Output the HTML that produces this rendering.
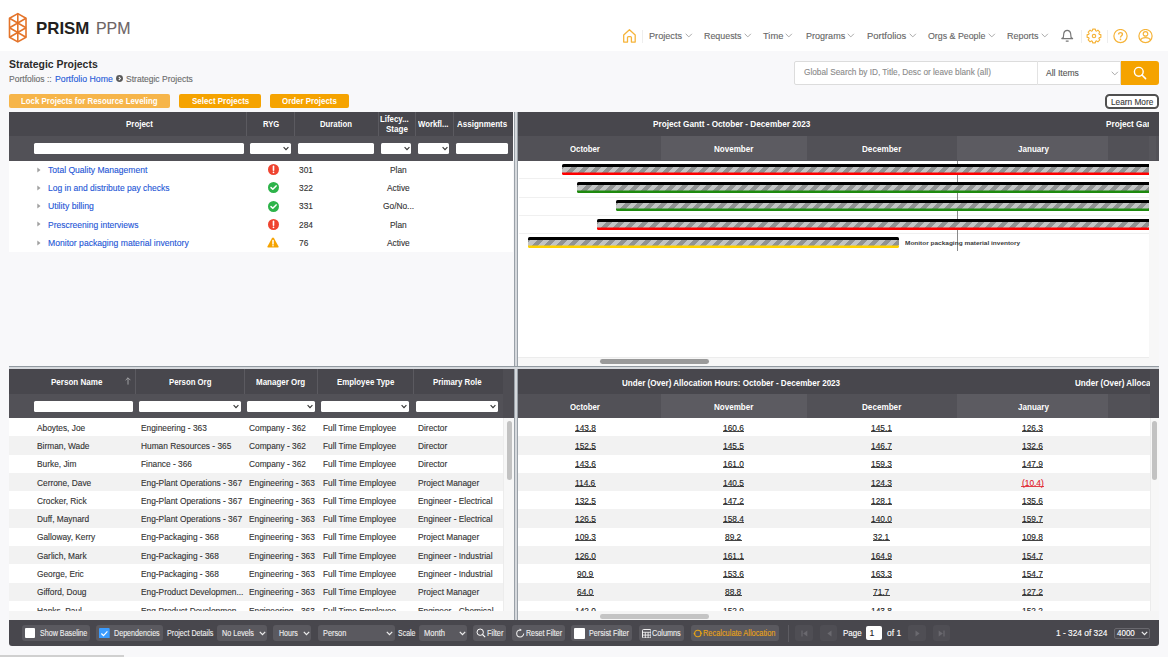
<!DOCTYPE html><html><head><meta charset="utf-8"><style>
*{box-sizing:border-box;margin:0;padding:0}
html,body{width:1168px;height:657px;overflow:hidden;background:#F8F8FA;font-family:"Liberation Sans",sans-serif;color:#333}
div,span,svg{position:absolute}
.t{white-space:nowrap;line-height:1;-webkit-text-stroke:0.12px currentColor}
.chev{width:4.2px;height:4.2px;border-right:0.9px solid #b0b0b0;border-bottom:0.9px solid #b0b0b0;transform:scaleX(1.1) rotate(45deg);top:32.6px}
.btn{top:93.7px;height:14.6px;background:#F5A300;border-radius:2px}
.h1{background:#48474D}
.h2{background:#525157}
.vd{width:1px;background:#5b5a60}
.fi{background:#fff;border-radius:1.5px;height:11px}
.ck{width:3.8px;height:3.8px;border-right:1.1px solid #333;border-bottom:1.1px solid #333;transform:rotate(45deg);top:2.4px}

.tb{background:#5A595F;border-radius:3px;top:625.2px;height:15.6px}
.tc{width:4px;height:4px;border-right:1.2px solid #fff;border-bottom:1.2px solid #fff;transform:scaleX(1.1) rotate(45deg);top:630.9px}
.bar{height:11px;border-radius:1.6px;overflow:hidden;background:repeating-linear-gradient(135deg,#909292 0 4.24px,#C2C4C4 4.24px 8.49px)}
</style></head><body><div style="left:0;top:0;width:1168px;height:51px;background:#fff"></div><svg style="left:8px;top:12px" width="22" height="32" viewBox="8 12 22 32"><g fill="none" stroke="#E4742A" stroke-width="1.6" stroke-linejoin="round">
<path d="M17.8 13.6 L26 18.3 L26 37.2 L17.8 41.9 L9.5 37.2 L9.5 18.3 Z"/><path d="M17.8 13.6 L17.8 41.9"/>
<path d="M9.5 18.3 L26 27.8 M26 18.3 L9.5 27.8 M9.5 27.8 L26 37.2 M26 27.8 L9.5 37.2"/></g>
<circle cx="17.8" cy="22.9" r="1" fill="#E26F22"/><circle cx="17.8" cy="32.6" r="1" fill="#E26F22"/></svg><div class="t" style="left:36.00px;top:20.00px;font-size:17px;color:#231f20;font-weight:bold;-webkit-text-stroke:0;transform:scaleX(0.9899);transform-origin:0 0">PRISM</div><div class="t" style="left:95.60px;top:20.00px;font-size:16.3px;color:#6d6465;transform:scaleX(0.9774);transform-origin:0 0">PPM</div><svg style="left:621px;top:28px" width="17" height="16" viewBox="0 0 17 16"><path d="M2.7 7.0 L8.45 1.7 L14.2 7.0 L14.2 14.1 L10.4 14.1 L10.4 9.6 Q10.4 8.6 9.5 8.6 L7.4 8.6 Q6.5 8.6 6.5 9.6 L6.5 14.1 L2.7 14.1 Z" fill="none" stroke="#F6B43A" stroke-width="1.3" stroke-linejoin="round"/></svg><div style="left:641.8px;top:29.5px;width:1px;height:13px;background:#eeeeee"></div><div class="t" style="left:648.80px;top:31.00px;font-size:9.8px;color:#666;transform:scaleX(0.9325);transform-origin:0 0">Projects</div><svg style="left:685px;top:33px" width="8" height="5" viewBox="0 0 8 5"><path d="M0.7 0.8 L3.8 3.9 L6.9 0.8" fill="none" stroke="#a8a8a8" stroke-width="1"/></svg><div class="t" style="left:703.80px;top:31.00px;font-size:9.8px;color:#666;transform:scaleX(0.9060);transform-origin:0 0">Requests</div><svg style="left:744px;top:33px" width="8" height="5" viewBox="0 0 8 5"><path d="M0.7 0.8 L3.8 3.9 L6.9 0.8" fill="none" stroke="#a8a8a8" stroke-width="1"/></svg><div class="t" style="left:763.30px;top:31.00px;font-size:9.8px;color:#666;transform:scaleX(0.9523);transform-origin:0 0">Time</div><svg style="left:785px;top:33px" width="8" height="5" viewBox="0 0 8 5"><path d="M0.7 0.8 L3.8 3.9 L6.9 0.8" fill="none" stroke="#a8a8a8" stroke-width="1"/></svg><div class="t" style="left:805.50px;top:31.00px;font-size:9.8px;color:#666;transform:scaleX(0.9230);transform-origin:0 0">Programs</div><svg style="left:847px;top:33px" width="8" height="5" viewBox="0 0 8 5"><path d="M0.7 0.8 L3.8 3.9 L6.9 0.8" fill="none" stroke="#a8a8a8" stroke-width="1"/></svg><div class="t" style="left:866.90px;top:31.00px;font-size:9.8px;color:#666;transform:scaleX(0.9622);transform-origin:0 0">Portfolios</div><svg style="left:909px;top:33px" width="8" height="5" viewBox="0 0 8 5"><path d="M0.7 0.8 L3.8 3.9 L6.9 0.8" fill="none" stroke="#a8a8a8" stroke-width="1"/></svg><div class="t" style="left:928.00px;top:31.00px;font-size:9.8px;color:#666;transform:scaleX(0.9008);transform-origin:0 0">Orgs &amp; People</div><svg style="left:988px;top:33px" width="8" height="5" viewBox="0 0 8 5"><path d="M0.7 0.8 L3.8 3.9 L6.9 0.8" fill="none" stroke="#a8a8a8" stroke-width="1"/></svg><div class="t" style="left:1007.00px;top:31.00px;font-size:9.8px;color:#666;transform:scaleX(0.9180);transform-origin:0 0">Reports</div><svg style="left:1041px;top:33px" width="8" height="5" viewBox="0 0 8 5"><path d="M0.7 0.8 L3.8 3.9 L6.9 0.8" fill="none" stroke="#a8a8a8" stroke-width="1"/></svg><svg style="left:1060px;top:28px" width="15" height="16" viewBox="0 0 15 16"><path d="M3.3 9.6 L3.8 5.4 Q4.2 2.3 7.2 2.3 Q10.2 2.3 10.6 5.4 L11.1 9.6 L12.6 10.6 L1.8 10.6 Z" fill="none" stroke="#777" stroke-width="1.15" stroke-linejoin="round"/><path d="M6.2 13.1 L8.2 13.1" stroke="#777" stroke-width="1.2" stroke-linecap="round"/></svg><div style="left:1081px;top:29.5px;width:1px;height:13px;background:#eeeeee"></div><svg style="left:1085.7px;top:27.6px" width="16" height="16" viewBox="-8 -8 16 16"><path d="M-1.65 -5.25 L-1.34 -6.87 L1.34 -6.87 L1.65 -5.25 L2.54 -4.88 L3.91 -5.80 L5.80 -3.91 L4.88 -2.54 L5.25 -1.65 L6.87 -1.34 L6.87 1.34 L5.25 1.65 L4.88 2.54 L5.80 3.91 L3.91 5.80 L2.54 4.88 L1.65 5.25 L1.34 6.87 L-1.34 6.87 L-1.65 5.25 L-2.54 4.88 L-3.91 5.80 L-5.80 3.91 L-4.88 2.54 L-5.25 1.65 L-6.87 1.34 L-6.87 -1.34 L-5.25 -1.65 L-4.88 -2.54 L-5.80 -3.91 L-3.91 -5.80 L-2.54 -4.88 Z" fill="none" stroke="#F6B43A" stroke-width="1.15" stroke-linejoin="round"/><circle r="1.7" fill="none" stroke="#F6B43A" stroke-width="1.15"/></svg><div style="left:1107px;top:29.5px;width:1px;height:13px;background:#eeeeee"></div><svg style="left:1112.5px;top:28.5px" width="15" height="15" viewBox="0 0 15 15"><circle cx="7.5" cy="7.1" r="6.6" fill="none" stroke="#F6B43A" stroke-width="1.2"/><path d="M5.6 5.5 Q5.6 3.6 7.5 3.6 Q9.4 3.6 9.4 5.3 Q9.4 6.4 8.3 7 Q7.5 7.5 7.5 8.5" fill="none" stroke="#F6B43A" stroke-width="1.4"/><circle cx="7.5" cy="10.4" r="0.85" fill="#F6B43A"/></svg><svg style="left:1138.3px;top:28.5px" width="15" height="15" viewBox="0 0 15 15"><circle cx="7.5" cy="7.1" r="6.6" fill="none" stroke="#F6B43A" stroke-width="1.2"/><circle cx="7.5" cy="4.9" r="2.3" fill="none" stroke="#F6B43A" stroke-width="1.2"/><path d="M2.2 11.2 Q3.6 8.6 7.5 8.6 Q11.4 8.6 12.8 11.2" fill="none" stroke="#F6B43A" stroke-width="1.2"/></svg><div class="t" style="left:9.30px;top:59.00px;font-size:11.1px;color:#2b2b2b;font-weight:bold;-webkit-text-stroke:0;transform:scaleX(0.9402);transform-origin:0 0">Strategic Projects</div><div class="t" style="left:9.30px;top:75.00px;font-size:9.3px;color:#6b6b6b;transform:scaleX(0.9180);transform-origin:0 0">Portfolios ::</div><div class="t" style="left:54.70px;top:75.00px;font-size:9.3px;color:#2458d8;transform:scaleX(0.9398);transform-origin:0 0">Portfolio Home</div><svg style="left:115.9px;top:75.2px" width="7" height="7" viewBox="0 0 7 7"><circle cx="3.5" cy="3.5" r="3.45" fill="#595959"/><path d="M2.8 1.9 L4.4 3.5 L2.8 5.1" fill="none" stroke="#fff" stroke-width="1.05"/></svg><div class="t" style="left:126.00px;top:75.00px;font-size:9.3px;color:#6b6b6b;transform:scaleX(0.9168);transform-origin:0 0">Strategic Projects</div><div style="left:794.2px;top:60.6px;width:327px;height:24px;background:#fff;border:1px solid #dcdcdc;border-radius:2px 0 0 2px"></div><div style="left:1036.8px;top:60.6px;width:1px;height:24px;background:#e3e3e3"></div><div class="t" style="left:803.70px;top:68.00px;font-size:9.1px;color:#8a8a8a;transform:scaleX(0.9085);transform-origin:0 0">Global Search by ID, Title, Desc or leave blank (all)</div><div class="t" style="left:1046.30px;top:69.00px;font-size:9.1px;color:#555;transform:scaleX(0.9405);transform-origin:0 0">All Items</div><svg style="left:1111px;top:71px" width="8" height="5" viewBox="0 0 8 5"><path d="M0.7 0.8 L3.8 3.9 L6.9 0.8" fill="none" stroke="#a8a8a8" stroke-width="1"/></svg><div style="left:1121px;top:60.6px;width:37.8px;height:24px;background:#F5A300;border-radius:0 3px 3px 0"></div><svg style="left:1133px;top:66px" width="14" height="14" viewBox="0 0 14 14"><circle cx="5.8" cy="5.8" r="4.4" fill="none" stroke="#fff" stroke-width="1.4"/><path d="M9 9 L12.6 12.6" stroke="#fff" stroke-width="1.5" stroke-linecap="round"/></svg><div style="left:1105.3px;top:94.3px;width:53.5px;height:14.8px;border:2px solid #505050;border-radius:4.5px;background:#fff"></div><div class="t" style="left:1110.60px;top:98.00px;font-size:8.8px;color:#3a3a3a;transform:scaleX(0.9400);transform-origin:0 0">Learn More</div><div class="btn" style="left:9.2px;width:161px;background:#F6B54A"></div><div class="t" style="left:21.40px;top:97.00px;font-size:9px;color:#fff;font-weight:bold;-webkit-text-stroke:0;transform:scaleX(0.8753);transform-origin:0 0">Lock Projects for Resource Leveling</div><div class="btn" style="left:179.4px;width:81.2px"></div><div class="t" style="left:191.60px;top:97.00px;font-size:9px;color:#fff;font-weight:bold;-webkit-text-stroke:0;transform:scaleX(0.8877);transform-origin:0 0">Select Projects</div><div class="btn" style="left:270px;width:79px"></div><div class="t" style="left:282.20px;top:97.00px;font-size:9px;color:#fff;font-weight:bold;-webkit-text-stroke:0;transform:scaleX(0.8764);transform-origin:0 0">Order Projects</div><div class="h1" style="left:9px;top:112px;width:503.5px;height:24px"></div><div class="h2" style="left:9px;top:136px;width:503.5px;height:24.6px"></div><div class="vd" style="left:246.4px;top:112px;height:24px"></div><div class="vd" style="left:294.4px;top:112px;height:24px"></div><div class="vd" style="left:377.6px;top:112px;height:24px"></div><div class="vd" style="left:414.7px;top:112px;height:24px"></div><div class="vd" style="left:452.8px;top:112px;height:24px"></div><div class="t" style="left:125.90px;top:120.00px;font-size:8.85px;color:#fff;font-weight:bold;-webkit-text-stroke:0;transform:scaleX(0.8971);transform-origin:0 0">Project</div><div class="t" style="left:262.90px;top:120.00px;font-size:8.85px;color:#fff;font-weight:bold;-webkit-text-stroke:0;transform:scaleX(0.8650);transform-origin:0 0">RYG</div><div class="t" style="left:320.40px;top:120.00px;font-size:8.85px;color:#fff;font-weight:bold;-webkit-text-stroke:0;transform:scaleX(0.8774);transform-origin:0 0">Duration</div><div class="t" style="left:417.50px;top:120.00px;font-size:8.85px;color:#fff;font-weight:bold;-webkit-text-stroke:0;transform:scaleX(0.8781);transform-origin:0 0">Workfl...</div><div class="t" style="left:457.00px;top:120.00px;font-size:8.85px;color:#fff;font-weight:bold;-webkit-text-stroke:0;transform:scaleX(0.9037);transform-origin:0 0">Assignments</div><div class="t" style="left:379.80px;top:115.00px;font-size:8.85px;color:#fff;font-weight:bold;-webkit-text-stroke:0;transform:scaleX(0.8891);transform-origin:0 0">Lifecy...</div><div class="t" style="left:385.50px;top:125.00px;font-size:8.85px;color:#fff;font-weight:bold;-webkit-text-stroke:0;transform:scaleX(0.9089);transform-origin:0 0">Stage</div><div class="fi" style="left:33.8px;top:143px;width:210.4px"></div><div class="fi" style="left:250px;top:143px;width:41.0px"><svg style="left:33.0px;top:3px" width="6" height="5" viewBox="0 0 6 5"><path d="M0.6 1.2 L3 3.6 L5.4 1.2" fill="none" stroke="#333" stroke-width="1.15"/></svg></div><div class="fi" style="left:297.6px;top:143px;width:76.4px"></div><div class="fi" style="left:380.8px;top:143px;width:30.5px"><svg style="left:23.2px;top:3px" width="6" height="5" viewBox="0 0 6 5"><path d="M0.6 1.2 L3 3.6 L5.4 1.2" fill="none" stroke="#333" stroke-width="1.15"/></svg></div><div class="fi" style="left:418px;top:143px;width:31.3px"><svg style="left:24.0px;top:3px" width="6" height="5" viewBox="0 0 6 5"><path d="M0.6 1.2 L3 3.6 L5.4 1.2" fill="none" stroke="#333" stroke-width="1.15"/></svg></div><div class="fi" style="left:455.5px;top:143px;width:52.5px"></div><div style="left:9px;top:160.6px;width:503.5px;height:91.79999999999998px;background:#fff"></div><svg style="left:37px;top:166.72px" width="4" height="6" viewBox="0 0 4 6"><path d="M0.3 0.6 L3.5 3 L0.3 5.4 Z" fill="#a0a0a0"/></svg><div class="t" style="left:47.60px;top:165.00px;font-size:9.4px;color:#2456d6;transform:scaleX(0.9126);transform-origin:0 0">Total Quality Management</div><svg style="left:267.5px;top:164.22px" width="11" height="11" viewBox="0 0 11 11"><circle cx="5.5" cy="5.5" r="5.5" fill="#EF4430"/><path d="M5.5 2.4 L5.5 6.3" stroke="#fff" stroke-width="1.6" stroke-linecap="round"/><circle cx="5.5" cy="8.3" r="0.85" fill="#fff"/></svg><div class="t" style="left:299.20px;top:166.00px;font-size:8.7px;color:#333;transform:scaleX(0.9600);transform-origin:0 0">301</div><div class="t" style="left:390.15px;top:166.00px;font-size:8.7px;color:#333;transform:scaleX(0.9600);transform-origin:0 0">Plan</div><svg style="left:37px;top:184.96px" width="4" height="6" viewBox="0 0 4 6"><path d="M0.3 0.6 L3.5 3 L0.3 5.4 Z" fill="#a0a0a0"/></svg><div class="t" style="left:47.60px;top:183.00px;font-size:9.4px;color:#2456d6;transform:scaleX(0.9079);transform-origin:0 0">Log in and distribute pay checks</div><svg style="left:267.5px;top:182.46px" width="11" height="11" viewBox="0 0 11 11"><circle cx="5.5" cy="5.5" r="5.5" fill="#2DB34A"/><path d="M3 5.6 L4.8 7.3 L8.1 3.9" fill="none" stroke="#fff" stroke-width="1.5" stroke-linecap="round" stroke-linejoin="round"/></svg><div class="t" style="left:299.20px;top:184.00px;font-size:8.7px;color:#333;transform:scaleX(0.9600);transform-origin:0 0">322</div><div class="t" style="left:387.14px;top:184.00px;font-size:8.7px;color:#333;transform:scaleX(0.9600);transform-origin:0 0">Active</div><svg style="left:37px;top:203.20px" width="4" height="6" viewBox="0 0 4 6"><path d="M0.3 0.6 L3.5 3 L0.3 5.4 Z" fill="#a0a0a0"/></svg><div class="t" style="left:47.60px;top:201.00px;font-size:9.4px;color:#2456d6;transform:scaleX(0.9273);transform-origin:0 0">Utility billing</div><svg style="left:267.5px;top:200.70px" width="11" height="11" viewBox="0 0 11 11"><circle cx="5.5" cy="5.5" r="5.5" fill="#2DB34A"/><path d="M3 5.6 L4.8 7.3 L8.1 3.9" fill="none" stroke="#fff" stroke-width="1.5" stroke-linecap="round" stroke-linejoin="round"/></svg><div class="t" style="left:299.20px;top:202.00px;font-size:8.7px;color:#333;transform:scaleX(0.9600);transform-origin:0 0">331</div><div class="t" style="left:382.97px;top:202.00px;font-size:8.7px;color:#333;transform:scaleX(0.9600);transform-origin:0 0">Go/No...</div><svg style="left:37px;top:221.44px" width="4" height="6" viewBox="0 0 4 6"><path d="M0.3 0.6 L3.5 3 L0.3 5.4 Z" fill="#a0a0a0"/></svg><div class="t" style="left:47.60px;top:220.00px;font-size:9.4px;color:#2456d6;transform:scaleX(0.9083);transform-origin:0 0">Prescreening interviews</div><svg style="left:267.5px;top:218.94px" width="11" height="11" viewBox="0 0 11 11"><circle cx="5.5" cy="5.5" r="5.5" fill="#EF4430"/><path d="M5.5 2.4 L5.5 6.3" stroke="#fff" stroke-width="1.6" stroke-linecap="round"/><circle cx="5.5" cy="8.3" r="0.85" fill="#fff"/></svg><div class="t" style="left:299.20px;top:221.00px;font-size:8.7px;color:#333;transform:scaleX(0.9600);transform-origin:0 0">284</div><div class="t" style="left:390.15px;top:221.00px;font-size:8.7px;color:#333;transform:scaleX(0.9600);transform-origin:0 0">Plan</div><svg style="left:37px;top:239.68px" width="4" height="6" viewBox="0 0 4 6"><path d="M0.3 0.6 L3.5 3 L0.3 5.4 Z" fill="#a0a0a0"/></svg><div class="t" style="left:47.60px;top:238.00px;font-size:9.4px;color:#2456d6;transform:scaleX(0.9184);transform-origin:0 0">Monitor packaging material inventory</div><svg style="left:267px;top:236.68px" width="12" height="11" viewBox="0 0 12 11"><path d="M6 0.6 Q6.6 0.6 7 1.3 L11.6 9.6 Q11.9 10.6 10.9 10.6 L1.1 10.6 Q0.1 10.6 0.4 9.6 L5 1.3 Q5.4 0.6 6 0.6 Z" fill="#F5A300"/><path d="M6 3.6 L6 6.9" stroke="#fff" stroke-width="1.5" stroke-linecap="round"/><circle cx="6" cy="8.7" r="0.8" fill="#fff"/></svg><div class="t" style="left:299.20px;top:239.00px;font-size:8.7px;color:#333;transform:scaleX(0.9600);transform-origin:0 0">76</div><div class="t" style="left:387.14px;top:239.00px;font-size:8.7px;color:#333;transform:scaleX(0.9600);transform-origin:0 0">Active</div><div style="left:513.6px;top:112px;width:4.4px;height:508.3px;background:#D6D9DD;border-left:1.3px solid #9AA1A8;border-right:1.3px solid #9AA1A8"></div><div class="h1" style="left:518px;top:112px;width:640.6px;height:24px"></div><div class="h2" style="left:518px;top:136px;width:640.6px;height:24.6px"></div><div class="t" style="left:652.70px;top:120.00px;font-size:8.85px;color:#fff;font-weight:bold;-webkit-text-stroke:0;transform:scaleX(0.9255);transform-origin:0 0">Project Gantt - October - December 2023</div><div style="left:1105.5px;top:112px;width:43.8px;height:24px;overflow:hidden"><div class="t" style="left:0.00px;top:8.00px;font-size:8.85px;color:#fff;font-weight:bold;-webkit-text-stroke:0;transform:scaleX(0.9255);transform-origin:0 0">Project Gantt - October - December 2023</div></div><div class="t" style="left:570.30px;top:145.00px;font-size:8.85px;color:#fff;font-weight:bold;-webkit-text-stroke:0;transform:scaleX(0.8814);transform-origin:0 0">October</div><div style="left:660.7px;top:136px;width:146.1px;height:24.4px;background:#5C5B61"></div><div class="t" style="left:713.80px;top:145.00px;font-size:8.85px;color:#fff;font-weight:bold;-webkit-text-stroke:0;transform:scaleX(0.9107);transform-origin:0 0">November</div><div class="t" style="left:862.45px;top:145.00px;font-size:8.85px;color:#fff;font-weight:bold;-webkit-text-stroke:0;transform:scaleX(0.9186);transform-origin:0 0">December</div><div style="left:957.2px;top:136px;width:151.1px;height:24.4px;background:#5C5B61"></div><div class="t" style="left:1017.55px;top:145.00px;font-size:8.85px;color:#fff;font-weight:bold;-webkit-text-stroke:0;transform:scaleX(0.9109);transform-origin:0 0">January</div><div style="left:1149.3px;top:136px;width:6.7px;height:24.4px;background:#57565C"></div><div style="left:518px;top:160.6px;width:631.3px;height:196.5px;background:#fff"></div><div style="left:1149.3px;top:160.6px;width:9.3px;height:205.2px;background:#F7F7F7"></div><div style="left:518px;top:357.1px;width:631.3px;height:8.7px;background:#F7F7F7;border-top:1px solid #ececec"></div><div style="left:600.4px;top:359.4px;width:108.2px;height:4.8px;background:#9a9a9a;border-radius:2.4px"></div><div style="left:519px;top:178.34px;width:630.3px;height:1px;background:#F0F0F0"></div><div style="left:519px;top:196.58px;width:630.3px;height:1px;background:#F0F0F0"></div><div style="left:519px;top:214.82px;width:630.3px;height:1px;background:#F0F0F0"></div><div style="left:519px;top:233.06px;width:630.3px;height:1px;background:#F0F0F0"></div><div style="left:957px;top:160.6px;width:1px;height:90px;background:#8a8a8a"></div><div class="bar" style="left:562.3px;top:164px;width:586.7px;border-radius:1.6px 0 0 1.6px;background:linear-gradient(#000 0 3px,transparent 3px 8px,#FF0000 9px),repeating-linear-gradient(135deg,#909292 0 4.24px,#C2C4C4 4.24px 8.49px)"></div><div class="bar" style="left:577px;top:182px;width:572.0px;border-radius:1.6px 0 0 1.6px;background:linear-gradient(#000 0 3px,transparent 3px 8px,#1E8A0E 9px),repeating-linear-gradient(135deg,#909292 0 4.24px,#C2C4C4 4.24px 8.49px)"></div><div class="bar" style="left:616.1px;top:200px;width:532.9px;border-radius:1.6px 0 0 1.6px;background:linear-gradient(#000 0 3px,transparent 3px 8px,#1E8A0E 9px),repeating-linear-gradient(135deg,#909292 0 4.24px,#C2C4C4 4.24px 8.49px)"></div><div class="bar" style="left:596.5px;top:219px;width:552.5px;border-radius:1.6px 0 0 1.6px;background:linear-gradient(#000 0 3px,transparent 3px 8px,#FF0000 9px),repeating-linear-gradient(135deg,#909292 0 4.24px,#C2C4C4 4.24px 8.49px)"></div><div class="bar" style="left:528.2px;top:237px;width:370.8px;border-radius:1.6px;background:linear-gradient(#000 0 3px,transparent 3px 8px,#FFD200 9px),repeating-linear-gradient(135deg,#909292 0 4.24px,#C2C4C4 4.24px 8.49px)"></div><div class="t" style="left:905.00px;top:240.00px;font-size:6.2px;color:#3a3a3a;font-weight:bold;-webkit-text-stroke:0;transform:scaleX(1.0470);transform-origin:0 0">Monitor packaging material inventory</div><div style="left:9px;top:365.8px;width:1149.6px;height:3.2px;background:#D6D9DD;border-top:1.2px solid #929AA1"></div><div class="h1" style="left:9px;top:369px;width:494.4px;height:25px"></div><div class="h2" style="left:9px;top:394px;width:494.4px;height:24.1px"></div><div style="left:503.4px;top:369px;width:10.2px;height:49.1px;background:#4E4D53"></div><div class="vd" style="left:135.4px;top:369px;height:25px"></div><div class="vd" style="left:243.6px;top:369px;height:25px"></div><div class="vd" style="left:317.4px;top:369px;height:25px"></div><div class="vd" style="left:412.6px;top:369px;height:25px"></div><div class="t" style="left:51.30px;top:378.00px;font-size:8.85px;color:#fff;font-weight:bold;-webkit-text-stroke:0;transform:scaleX(0.9092);transform-origin:0 0">Person Name</div><div class="t" style="left:168.80px;top:378.00px;font-size:8.85px;color:#fff;font-weight:bold;-webkit-text-stroke:0;transform:scaleX(0.8802);transform-origin:0 0">Person Org</div><div class="t" style="left:256.30px;top:378.00px;font-size:8.85px;color:#fff;font-weight:bold;-webkit-text-stroke:0;transform:scaleX(0.9017);transform-origin:0 0">Manager Org</div><div class="t" style="left:336.60px;top:378.00px;font-size:8.85px;color:#fff;font-weight:bold;-webkit-text-stroke:0;transform:scaleX(0.8920);transform-origin:0 0">Employee Type</div><div class="t" style="left:432.50px;top:378.00px;font-size:8.85px;color:#fff;font-weight:bold;-webkit-text-stroke:0;transform:scaleX(0.8889);transform-origin:0 0">Primary Role</div><svg style="left:124.6px;top:377.4px" width="6" height="8" viewBox="0 0 6 8"><path d="M3 7.6 L3 0.8 M0.6 3.2 L3 0.8 L5.4 3.2" fill="none" stroke="#a8a8ac" stroke-width="0.9"/></svg><div class="fi" style="left:33.8px;top:401px;width:99.2px"></div><div class="fi" style="left:138.7px;top:401px;width:102.3px"><svg style="left:94.3px;top:3px" width="6" height="5" viewBox="0 0 6 5"><path d="M0.6 1.2 L3 3.6 L5.4 1.2" fill="none" stroke="#333" stroke-width="1.15"/></svg></div><div class="fi" style="left:247px;top:401px;width:67.5px"><svg style="left:60.0px;top:3px" width="6" height="5" viewBox="0 0 6 5"><path d="M0.6 1.2 L3 3.6 L5.4 1.2" fill="none" stroke="#333" stroke-width="1.15"/></svg></div><div class="fi" style="left:320.7px;top:401px;width:88.1px"><svg style="left:80.3px;top:3px" width="6" height="5" viewBox="0 0 6 5"><path d="M0.6 1.2 L3 3.6 L5.4 1.2" fill="none" stroke="#333" stroke-width="1.15"/></svg></div><div class="fi" style="left:415.5px;top:401px;width:82.0px"><svg style="left:74.5px;top:3px" width="6" height="5" viewBox="0 0 6 5"><path d="M0.6 1.2 L3 3.6 L5.4 1.2" fill="none" stroke="#333" stroke-width="1.15"/></svg></div><div style="left:9px;top:418px;width:494.4px;height:193.3px;overflow:hidden;background:#fff"><div style="left:0;top:0.00px;width:494.4px;height:18.29px;background:#fff"></div><div class="t" style="left:27.70px;top:6.00px;font-size:8.6px;color:#333;transform:scaleX(0.9700);transform-origin:0 0">Aboytes, Joe</div><div class="t" style="left:132.10px;top:6.00px;font-size:8.6px;color:#333;transform:scaleX(0.9700);transform-origin:0 0">Engineering - 363</div><div class="t" style="left:240.30px;top:6.00px;font-size:8.6px;color:#333;transform:scaleX(0.9700);transform-origin:0 0">Company - 362</div><div class="t" style="left:313.80px;top:6.00px;font-size:8.6px;color:#333;transform:scaleX(0.9700);transform-origin:0 0">Full Time Employee</div><div class="t" style="left:408.60px;top:6.00px;font-size:8.6px;color:#333;transform:scaleX(0.9700);transform-origin:0 0">Director</div><div style="left:0;top:18.29px;width:494.4px;height:18.29px;background:#F2F2F2"></div><div class="t" style="left:27.70px;top:24.00px;font-size:8.6px;color:#333;transform:scaleX(0.9700);transform-origin:0 0">Birman, Wade</div><div class="t" style="left:132.10px;top:24.00px;font-size:8.6px;color:#333;transform:scaleX(0.9700);transform-origin:0 0">Human Resources - 365</div><div class="t" style="left:240.30px;top:24.00px;font-size:8.6px;color:#333;transform:scaleX(0.9700);transform-origin:0 0">Company - 362</div><div class="t" style="left:313.80px;top:24.00px;font-size:8.6px;color:#333;transform:scaleX(0.9700);transform-origin:0 0">Full Time Employee</div><div class="t" style="left:408.60px;top:24.00px;font-size:8.6px;color:#333;transform:scaleX(0.9700);transform-origin:0 0">Director</div><div style="left:0;top:36.58px;width:494.4px;height:18.29px;background:#fff"></div><div class="t" style="left:27.70px;top:42.00px;font-size:8.6px;color:#333;transform:scaleX(0.9700);transform-origin:0 0">Burke, Jim</div><div class="t" style="left:132.10px;top:42.00px;font-size:8.6px;color:#333;transform:scaleX(0.9700);transform-origin:0 0">Finance - 366</div><div class="t" style="left:240.30px;top:42.00px;font-size:8.6px;color:#333;transform:scaleX(0.9700);transform-origin:0 0">Company - 362</div><div class="t" style="left:313.80px;top:42.00px;font-size:8.6px;color:#333;transform:scaleX(0.9700);transform-origin:0 0">Full Time Employee</div><div class="t" style="left:408.60px;top:42.00px;font-size:8.6px;color:#333;transform:scaleX(0.9700);transform-origin:0 0">Director</div><div style="left:0;top:54.87px;width:494.4px;height:18.29px;background:#F2F2F2"></div><div class="t" style="left:27.70px;top:61.00px;font-size:8.6px;color:#333;transform:scaleX(0.9700);transform-origin:0 0">Cerrone, Dave</div><div class="t" style="left:132.10px;top:61.00px;font-size:8.6px;color:#333;transform:scaleX(0.9700);transform-origin:0 0">Eng-Plant Operations - 367</div><div class="t" style="left:240.30px;top:61.00px;font-size:8.6px;color:#333;transform:scaleX(0.9700);transform-origin:0 0">Engineering - 363</div><div class="t" style="left:313.80px;top:61.00px;font-size:8.6px;color:#333;transform:scaleX(0.9700);transform-origin:0 0">Full Time Employee</div><div class="t" style="left:408.60px;top:61.00px;font-size:8.6px;color:#333;transform:scaleX(0.9700);transform-origin:0 0">Project Manager</div><div style="left:0;top:73.16px;width:494.4px;height:18.29px;background:#fff"></div><div class="t" style="left:27.70px;top:79.00px;font-size:8.6px;color:#333;transform:scaleX(0.9700);transform-origin:0 0">Crocker, Rick</div><div class="t" style="left:132.10px;top:79.00px;font-size:8.6px;color:#333;transform:scaleX(0.9700);transform-origin:0 0">Eng-Plant Operations - 367</div><div class="t" style="left:240.30px;top:79.00px;font-size:8.6px;color:#333;transform:scaleX(0.9700);transform-origin:0 0">Engineering - 363</div><div class="t" style="left:313.80px;top:79.00px;font-size:8.6px;color:#333;transform:scaleX(0.9700);transform-origin:0 0">Full Time Employee</div><div class="t" style="left:408.60px;top:79.00px;font-size:8.6px;color:#333;transform:scaleX(0.9700);transform-origin:0 0">Engineer - Electrical</div><div style="left:0;top:91.45px;width:494.4px;height:18.29px;background:#F2F2F2"></div><div class="t" style="left:27.70px;top:97.00px;font-size:8.6px;color:#333;transform:scaleX(0.9700);transform-origin:0 0">Duff, Maynard</div><div class="t" style="left:132.10px;top:97.00px;font-size:8.6px;color:#333;transform:scaleX(0.9700);transform-origin:0 0">Eng-Plant Operations - 367</div><div class="t" style="left:240.30px;top:97.00px;font-size:8.6px;color:#333;transform:scaleX(0.9700);transform-origin:0 0">Engineering - 363</div><div class="t" style="left:313.80px;top:97.00px;font-size:8.6px;color:#333;transform:scaleX(0.9700);transform-origin:0 0">Full Time Employee</div><div class="t" style="left:408.60px;top:97.00px;font-size:8.6px;color:#333;transform:scaleX(0.9700);transform-origin:0 0">Engineer - Electrical</div><div style="left:0;top:109.74px;width:494.4px;height:18.29px;background:#fff"></div><div class="t" style="left:27.70px;top:115.00px;font-size:8.6px;color:#333;transform:scaleX(0.9700);transform-origin:0 0">Galloway, Kerry</div><div class="t" style="left:132.10px;top:115.00px;font-size:8.6px;color:#333;transform:scaleX(0.9700);transform-origin:0 0">Eng-Packaging - 368</div><div class="t" style="left:240.30px;top:115.00px;font-size:8.6px;color:#333;transform:scaleX(0.9700);transform-origin:0 0">Engineering - 363</div><div class="t" style="left:313.80px;top:115.00px;font-size:8.6px;color:#333;transform:scaleX(0.9700);transform-origin:0 0">Full Time Employee</div><div class="t" style="left:408.60px;top:115.00px;font-size:8.6px;color:#333;transform:scaleX(0.9700);transform-origin:0 0">Project Manager</div><div style="left:0;top:128.03px;width:494.4px;height:18.29px;background:#F2F2F2"></div><div class="t" style="left:27.70px;top:134.00px;font-size:8.6px;color:#333;transform:scaleX(0.9700);transform-origin:0 0">Garlich, Mark</div><div class="t" style="left:132.10px;top:134.00px;font-size:8.6px;color:#333;transform:scaleX(0.9700);transform-origin:0 0">Eng-Packaging - 368</div><div class="t" style="left:240.30px;top:134.00px;font-size:8.6px;color:#333;transform:scaleX(0.9700);transform-origin:0 0">Engineering - 363</div><div class="t" style="left:313.80px;top:134.00px;font-size:8.6px;color:#333;transform:scaleX(0.9700);transform-origin:0 0">Full Time Employee</div><div class="t" style="left:408.60px;top:134.00px;font-size:8.6px;color:#333;transform:scaleX(0.9700);transform-origin:0 0">Engineer - Industrial</div><div style="left:0;top:146.32px;width:494.4px;height:18.29px;background:#fff"></div><div class="t" style="left:27.70px;top:152.00px;font-size:8.6px;color:#333;transform:scaleX(0.9700);transform-origin:0 0">George, Eric</div><div class="t" style="left:132.10px;top:152.00px;font-size:8.6px;color:#333;transform:scaleX(0.9700);transform-origin:0 0">Eng-Packaging - 368</div><div class="t" style="left:240.30px;top:152.00px;font-size:8.6px;color:#333;transform:scaleX(0.9700);transform-origin:0 0">Engineering - 363</div><div class="t" style="left:313.80px;top:152.00px;font-size:8.6px;color:#333;transform:scaleX(0.9700);transform-origin:0 0">Full Time Employee</div><div class="t" style="left:408.60px;top:152.00px;font-size:8.6px;color:#333;transform:scaleX(0.9700);transform-origin:0 0">Engineer - Industrial</div><div style="left:0;top:164.61px;width:494.4px;height:18.29px;background:#F2F2F2"></div><div class="t" style="left:27.70px;top:170.00px;font-size:8.6px;color:#333;transform:scaleX(0.9700);transform-origin:0 0">Gifford, Doug</div><div class="t" style="left:132.10px;top:170.00px;font-size:8.6px;color:#333;transform:scaleX(0.9700);transform-origin:0 0">Eng-Product Developmen...</div><div class="t" style="left:240.30px;top:170.00px;font-size:8.6px;color:#333;transform:scaleX(0.9700);transform-origin:0 0">Engineering - 363</div><div class="t" style="left:313.80px;top:170.00px;font-size:8.6px;color:#333;transform:scaleX(0.9700);transform-origin:0 0">Full Time Employee</div><div class="t" style="left:408.60px;top:170.00px;font-size:8.6px;color:#333;transform:scaleX(0.9700);transform-origin:0 0">Project Manager</div><div style="left:0;top:182.90px;width:494.4px;height:18.29px;background:#fff"></div><div class="t" style="left:27.70px;top:189.00px;font-size:8.6px;color:#333;transform:scaleX(0.9700);transform-origin:0 0">Hanks, Paul</div><div class="t" style="left:132.10px;top:189.00px;font-size:8.6px;color:#333;transform:scaleX(0.9700);transform-origin:0 0">Eng-Product Developmen...</div><div class="t" style="left:240.30px;top:189.00px;font-size:8.6px;color:#333;transform:scaleX(0.9700);transform-origin:0 0">Engineering - 363</div><div class="t" style="left:313.80px;top:189.00px;font-size:8.6px;color:#333;transform:scaleX(0.9700);transform-origin:0 0">Full Time Employee</div><div class="t" style="left:408.60px;top:189.00px;font-size:8.6px;color:#333;transform:scaleX(0.9700);transform-origin:0 0">Engineer - Chemical</div></div><div style="left:503.4px;top:418px;width:10.2px;height:193.3px;background:#F7F7F7;border-left:1px solid #ececec"></div><div style="left:507px;top:420.8px;width:5px;height:59.7px;background:#C2C2C2;border-radius:2.5px"></div><div class="h1" style="left:518px;top:369px;width:640.6px;height:25px"></div><div class="h2" style="left:518px;top:394px;width:640.6px;height:24.1px"></div><div class="t" style="left:622.30px;top:379.00px;font-size:8.85px;color:#fff;font-weight:bold;-webkit-text-stroke:0;transform:scaleX(0.9125);transform-origin:0 0">Under (Over) Allocation Hours: October - December 2023</div><div style="left:1075px;top:369px;width:74.5px;height:25px;overflow:hidden"><div class="t" style="left:0.00px;top:10.00px;font-size:8.85px;color:#fff;font-weight:bold;-webkit-text-stroke:0;transform:scaleX(0.9125);transform-origin:0 0">Under (Over) Allocation Hours: October - December 2023</div></div><div class="t" style="left:570.30px;top:403.00px;font-size:8.85px;color:#fff;font-weight:bold;-webkit-text-stroke:0;transform:scaleX(0.8814);transform-origin:0 0">October</div><div style="left:660.7px;top:394px;width:146.1px;height:24.1px;background:#5C5B61"></div><div class="t" style="left:713.80px;top:403.00px;font-size:8.85px;color:#fff;font-weight:bold;-webkit-text-stroke:0;transform:scaleX(0.9107);transform-origin:0 0">November</div><div class="t" style="left:862.45px;top:403.00px;font-size:8.85px;color:#fff;font-weight:bold;-webkit-text-stroke:0;transform:scaleX(0.9186);transform-origin:0 0">December</div><div style="left:957.2px;top:394px;width:151.1px;height:24.1px;background:#5C5B61"></div><div class="t" style="left:1017.55px;top:403.00px;font-size:8.85px;color:#fff;font-weight:bold;-webkit-text-stroke:0;transform:scaleX(0.9109);transform-origin:0 0">January</div><div style="left:1149.5px;top:369px;width:9.1px;height:49.1px;background:#4E4D53"></div><div style="left:518px;top:418px;width:631.5px;height:193.3px;overflow:hidden;background:#fff"><div style="left:0;top:0.00px;width:631.5px;height:18.29px;background:#fff"></div><div class="t" style="left:56.86px;top:6.00px;font-size:8.6px;color:#222;transform:scaleX(0.9700);transform-origin:0 0">143.8</div><div style="left:56.56px;top:13.10px;width:21.47px;height:1px;background:#222;opacity:0.85"></div><div class="t" style="left:205.06px;top:6.00px;font-size:8.6px;color:#222;transform:scaleX(0.9700);transform-origin:0 0">160.6</div><div style="left:204.76px;top:13.10px;width:21.47px;height:1px;background:#222;opacity:0.85"></div><div class="t" style="left:353.06px;top:6.00px;font-size:8.6px;color:#222;transform:scaleX(0.9700);transform-origin:0 0">145.1</div><div style="left:352.76px;top:13.10px;width:21.47px;height:1px;background:#222;opacity:0.85"></div><div class="t" style="left:504.16px;top:6.00px;font-size:8.6px;color:#222;transform:scaleX(0.9700);transform-origin:0 0">126.3</div><div style="left:503.86px;top:13.10px;width:21.47px;height:1px;background:#222;opacity:0.85"></div><div style="left:0;top:18.29px;width:631.5px;height:18.29px;background:#F2F2F2"></div><div class="t" style="left:56.86px;top:24.00px;font-size:8.6px;color:#222;transform:scaleX(0.9700);transform-origin:0 0">152.5</div><div style="left:56.56px;top:31.10px;width:21.47px;height:1px;background:#222;opacity:0.85"></div><div class="t" style="left:205.06px;top:24.00px;font-size:8.6px;color:#222;transform:scaleX(0.9700);transform-origin:0 0">145.5</div><div style="left:204.76px;top:31.10px;width:21.47px;height:1px;background:#222;opacity:0.85"></div><div class="t" style="left:353.06px;top:24.00px;font-size:8.6px;color:#222;transform:scaleX(0.9700);transform-origin:0 0">146.7</div><div style="left:352.76px;top:31.10px;width:21.47px;height:1px;background:#222;opacity:0.85"></div><div class="t" style="left:504.16px;top:24.00px;font-size:8.6px;color:#222;transform:scaleX(0.9700);transform-origin:0 0">132.6</div><div style="left:503.86px;top:31.10px;width:21.47px;height:1px;background:#222;opacity:0.85"></div><div style="left:0;top:36.58px;width:631.5px;height:18.29px;background:#fff"></div><div class="t" style="left:56.86px;top:42.00px;font-size:8.6px;color:#222;transform:scaleX(0.9700);transform-origin:0 0">143.6</div><div style="left:56.56px;top:49.10px;width:21.47px;height:1px;background:#222;opacity:0.85"></div><div class="t" style="left:205.06px;top:42.00px;font-size:8.6px;color:#222;transform:scaleX(0.9700);transform-origin:0 0">161.0</div><div style="left:204.76px;top:49.10px;width:21.47px;height:1px;background:#222;opacity:0.85"></div><div class="t" style="left:353.06px;top:42.00px;font-size:8.6px;color:#222;transform:scaleX(0.9700);transform-origin:0 0">159.3</div><div style="left:352.76px;top:49.10px;width:21.47px;height:1px;background:#222;opacity:0.85"></div><div class="t" style="left:504.16px;top:42.00px;font-size:8.6px;color:#222;transform:scaleX(0.9700);transform-origin:0 0">147.9</div><div style="left:503.86px;top:49.10px;width:21.47px;height:1px;background:#222;opacity:0.85"></div><div style="left:0;top:54.87px;width:631.5px;height:18.29px;background:#F2F2F2"></div><div class="t" style="left:57.18px;top:61.00px;font-size:8.6px;color:#222;transform:scaleX(0.9700);transform-origin:0 0">114.6</div><div style="left:56.88px;top:68.10px;width:20.85px;height:1px;background:#222;opacity:0.85"></div><div class="t" style="left:205.06px;top:61.00px;font-size:8.6px;color:#222;transform:scaleX(0.9700);transform-origin:0 0">140.5</div><div style="left:204.76px;top:68.10px;width:21.47px;height:1px;background:#222;opacity:0.85"></div><div class="t" style="left:353.06px;top:61.00px;font-size:8.6px;color:#222;transform:scaleX(0.9700);transform-origin:0 0">124.3</div><div style="left:352.76px;top:68.10px;width:21.47px;height:1px;background:#222;opacity:0.85"></div><div class="t" style="left:503.71px;top:61.00px;font-size:8.6px;color:#E0202A;transform:scaleX(0.9700);transform-origin:0 0">(10.4)</div><div style="left:503.41px;top:68.10px;width:22.38px;height:1px;background:#E0202A;opacity:0.85"></div><div style="left:0;top:73.16px;width:631.5px;height:18.29px;background:#fff"></div><div class="t" style="left:56.86px;top:79.00px;font-size:8.6px;color:#222;transform:scaleX(0.9700);transform-origin:0 0">132.5</div><div style="left:56.56px;top:86.10px;width:21.47px;height:1px;background:#222;opacity:0.85"></div><div class="t" style="left:205.06px;top:79.00px;font-size:8.6px;color:#222;transform:scaleX(0.9700);transform-origin:0 0">147.2</div><div style="left:204.76px;top:86.10px;width:21.47px;height:1px;background:#222;opacity:0.85"></div><div class="t" style="left:353.06px;top:79.00px;font-size:8.6px;color:#222;transform:scaleX(0.9700);transform-origin:0 0">128.1</div><div style="left:352.76px;top:86.10px;width:21.47px;height:1px;background:#222;opacity:0.85"></div><div class="t" style="left:504.16px;top:79.00px;font-size:8.6px;color:#222;transform:scaleX(0.9700);transform-origin:0 0">135.6</div><div style="left:503.86px;top:86.10px;width:21.47px;height:1px;background:#222;opacity:0.85"></div><div style="left:0;top:91.45px;width:631.5px;height:18.29px;background:#F2F2F2"></div><div class="t" style="left:56.86px;top:97.00px;font-size:8.6px;color:#222;transform:scaleX(0.9700);transform-origin:0 0">126.5</div><div style="left:56.56px;top:104.10px;width:21.47px;height:1px;background:#222;opacity:0.85"></div><div class="t" style="left:205.06px;top:97.00px;font-size:8.6px;color:#222;transform:scaleX(0.9700);transform-origin:0 0">158.4</div><div style="left:204.76px;top:104.10px;width:21.47px;height:1px;background:#222;opacity:0.85"></div><div class="t" style="left:353.06px;top:97.00px;font-size:8.6px;color:#222;transform:scaleX(0.9700);transform-origin:0 0">140.0</div><div style="left:352.76px;top:104.10px;width:21.47px;height:1px;background:#222;opacity:0.85"></div><div class="t" style="left:504.16px;top:97.00px;font-size:8.6px;color:#222;transform:scaleX(0.9700);transform-origin:0 0">159.7</div><div style="left:503.86px;top:104.10px;width:21.47px;height:1px;background:#222;opacity:0.85"></div><div style="left:0;top:109.74px;width:631.5px;height:18.29px;background:#fff"></div><div class="t" style="left:56.86px;top:115.00px;font-size:8.6px;color:#222;transform:scaleX(0.9700);transform-origin:0 0">109.3</div><div style="left:56.56px;top:122.10px;width:21.47px;height:1px;background:#222;opacity:0.85"></div><div class="t" style="left:207.38px;top:115.00px;font-size:8.6px;color:#222;transform:scaleX(0.9700);transform-origin:0 0">89.2</div><div style="left:207.08px;top:122.10px;width:16.83px;height:1px;background:#222;opacity:0.85"></div><div class="t" style="left:355.38px;top:115.00px;font-size:8.6px;color:#222;transform:scaleX(0.9700);transform-origin:0 0">32.1</div><div style="left:355.08px;top:122.10px;width:16.83px;height:1px;background:#222;opacity:0.85"></div><div class="t" style="left:504.16px;top:115.00px;font-size:8.6px;color:#222;transform:scaleX(0.9700);transform-origin:0 0">109.8</div><div style="left:503.86px;top:122.10px;width:21.47px;height:1px;background:#222;opacity:0.85"></div><div style="left:0;top:128.03px;width:631.5px;height:18.29px;background:#F2F2F2"></div><div class="t" style="left:56.86px;top:134.00px;font-size:8.6px;color:#222;transform:scaleX(0.9700);transform-origin:0 0">126.0</div><div style="left:56.56px;top:141.10px;width:21.47px;height:1px;background:#222;opacity:0.85"></div><div class="t" style="left:205.06px;top:134.00px;font-size:8.6px;color:#222;transform:scaleX(0.9700);transform-origin:0 0">161.1</div><div style="left:204.76px;top:141.10px;width:21.47px;height:1px;background:#222;opacity:0.85"></div><div class="t" style="left:353.06px;top:134.00px;font-size:8.6px;color:#222;transform:scaleX(0.9700);transform-origin:0 0">164.9</div><div style="left:352.76px;top:141.10px;width:21.47px;height:1px;background:#222;opacity:0.85"></div><div class="t" style="left:504.16px;top:134.00px;font-size:8.6px;color:#222;transform:scaleX(0.9700);transform-origin:0 0">154.7</div><div style="left:503.86px;top:141.10px;width:21.47px;height:1px;background:#222;opacity:0.85"></div><div style="left:0;top:146.32px;width:631.5px;height:18.29px;background:#fff"></div><div class="t" style="left:59.18px;top:152.00px;font-size:8.6px;color:#222;transform:scaleX(0.9700);transform-origin:0 0">90.9</div><div style="left:58.88px;top:159.10px;width:16.83px;height:1px;background:#222;opacity:0.85"></div><div class="t" style="left:205.06px;top:152.00px;font-size:8.6px;color:#222;transform:scaleX(0.9700);transform-origin:0 0">153.6</div><div style="left:204.76px;top:159.10px;width:21.47px;height:1px;background:#222;opacity:0.85"></div><div class="t" style="left:353.06px;top:152.00px;font-size:8.6px;color:#222;transform:scaleX(0.9700);transform-origin:0 0">163.3</div><div style="left:352.76px;top:159.10px;width:21.47px;height:1px;background:#222;opacity:0.85"></div><div class="t" style="left:504.16px;top:152.00px;font-size:8.6px;color:#222;transform:scaleX(0.9700);transform-origin:0 0">154.7</div><div style="left:503.86px;top:159.10px;width:21.47px;height:1px;background:#222;opacity:0.85"></div><div style="left:0;top:164.61px;width:631.5px;height:18.29px;background:#F2F2F2"></div><div class="t" style="left:59.18px;top:170.00px;font-size:8.6px;color:#222;transform:scaleX(0.9700);transform-origin:0 0">64.0</div><div style="left:58.88px;top:177.10px;width:16.83px;height:1px;background:#222;opacity:0.85"></div><div class="t" style="left:207.38px;top:170.00px;font-size:8.6px;color:#222;transform:scaleX(0.9700);transform-origin:0 0">88.8</div><div style="left:207.08px;top:177.10px;width:16.83px;height:1px;background:#222;opacity:0.85"></div><div class="t" style="left:355.38px;top:170.00px;font-size:8.6px;color:#222;transform:scaleX(0.9700);transform-origin:0 0">71.7</div><div style="left:355.08px;top:177.10px;width:16.83px;height:1px;background:#222;opacity:0.85"></div><div class="t" style="left:504.16px;top:170.00px;font-size:8.6px;color:#222;transform:scaleX(0.9700);transform-origin:0 0">127.2</div><div style="left:503.86px;top:177.10px;width:21.47px;height:1px;background:#222;opacity:0.85"></div><div style="left:0;top:182.90px;width:631.5px;height:18.29px;background:#fff"></div><div class="t" style="left:56.86px;top:189.00px;font-size:8.6px;color:#222;transform:scaleX(0.9700);transform-origin:0 0">142.0</div><div style="left:56.56px;top:196.10px;width:21.47px;height:1px;background:#222;opacity:0.85"></div><div class="t" style="left:205.06px;top:189.00px;font-size:8.6px;color:#222;transform:scaleX(0.9700);transform-origin:0 0">152.9</div><div style="left:204.76px;top:196.10px;width:21.47px;height:1px;background:#222;opacity:0.85"></div><div class="t" style="left:353.06px;top:189.00px;font-size:8.6px;color:#222;transform:scaleX(0.9700);transform-origin:0 0">143.8</div><div style="left:352.76px;top:196.10px;width:21.47px;height:1px;background:#222;opacity:0.85"></div><div class="t" style="left:504.16px;top:189.00px;font-size:8.6px;color:#222;transform:scaleX(0.9700);transform-origin:0 0">152.2</div><div style="left:503.86px;top:196.10px;width:21.47px;height:1px;background:#222;opacity:0.85"></div></div><div style="left:1149.5px;top:418px;width:9.1px;height:193.3px;background:#F7F7F7;border-left:1px solid #ececec"></div><div style="left:1152.2px;top:420.8px;width:4.9px;height:59.7px;background:#C2C2C2;border-radius:2.5px"></div><div style="left:9px;top:611.3px;width:1149.6px;height:9.0px;background:#F5F5F5"></div><div style="left:513.6px;top:611.3px;width:4.4px;height:9px;background:#D6D9DD;border-left:1.3px solid #9AA1A8;border-right:1.3px solid #9AA1A8"></div><div style="left:600.4px;top:614px;width:108.2px;height:4.6px;background:#C4C4C4;border-radius:2.3px"></div><div style="left:9px;top:620.2px;width:1149.8px;height:26.2px;background:#48474D;border-radius:0 0 3px 3px"></div><div class="tb" style="left:21.5px;width:68.4px"></div><div style="left:24.5px;top:627.8px;width:10.6px;height:10.6px;background:#fff;border-radius:1px"></div><div class="t" style="left:39.70px;top:630.00px;font-size:8.2px;color:#eee;transform:scaleX(0.8731);transform-origin:0 0">Show Baseline</div><div class="tb" style="left:96.2px;width:66.5px"></div><svg style="left:99.3px;top:627.8px" width="10.7" height="10.7" viewBox="0 0 10.7 10.7"><rect width="10.7" height="10.7" rx="1" fill="#3B9CFF"/><path d="M2.4 5.5 L4.5 7.6 L8.4 3.3" fill="none" stroke="#fff" stroke-width="1.2"/></svg><div class="t" style="left:114.40px;top:630.00px;font-size:8.2px;color:#eee;transform:scaleX(0.8728);transform-origin:0 0">Dependencies</div><div class="t" style="left:166.60px;top:630.00px;font-size:8.2px;color:#eee;transform:scaleX(0.8788);transform-origin:0 0">Project Details</div><div class="tb" style="left:216.9px;width:49.9px"></div><div class="t" style="left:222.00px;top:630.00px;font-size:8.2px;color:#eee;transform:scaleX(0.8758);transform-origin:0 0">No Levels</div><svg style="left:259px;top:631px" width="7" height="5" viewBox="0 0 7 5"><path d="M0.8 0.9 L3.5 3.6 L6.2 0.9" fill="none" stroke="#eee" stroke-width="1.25"/></svg><div class="tb" style="left:273px;width:38.4px"></div><div class="t" style="left:278.80px;top:630.00px;font-size:8.2px;color:#eee;transform:scaleX(0.8652);transform-origin:0 0">Hours</div><svg style="left:303px;top:631px" width="7" height="5" viewBox="0 0 7 5"><path d="M0.8 0.9 L3.5 3.6 L6.2 0.9" fill="none" stroke="#eee" stroke-width="1.25"/></svg><div class="tb" style="left:317.8px;width:76.8px"></div><div class="t" style="left:322.70px;top:630.00px;font-size:8.2px;color:#eee;transform:scaleX(0.8978);transform-origin:0 0">Person</div><svg style="left:386px;top:631px" width="7" height="5" viewBox="0 0 7 5"><path d="M0.8 0.9 L3.5 3.6 L6.2 0.9" fill="none" stroke="#eee" stroke-width="1.25"/></svg><div class="t" style="left:397.80px;top:630.00px;font-size:8.2px;color:#eee;transform:scaleX(0.8543);transform-origin:0 0">Scale</div><div class="tb" style="left:418.8px;width:47.8px"></div><div class="t" style="left:423.90px;top:630.00px;font-size:8.2px;color:#eee;transform:scaleX(0.9224);transform-origin:0 0">Month</div><svg style="left:459px;top:631px" width="7" height="5" viewBox="0 0 7 5"><path d="M0.8 0.9 L3.5 3.6 L6.2 0.9" fill="none" stroke="#eee" stroke-width="1.25"/></svg><div class="tb" style="left:473.2px;width:32.9px"></div><svg style="left:475.5px;top:628.4px" width="10" height="10" viewBox="0 0 10 10"><circle cx="4.2" cy="4.2" r="3.2" fill="none" stroke="#fff" stroke-width="1"/><path d="M6.5 6.5 L9.2 9.2" stroke="#fff" stroke-width="1.1"/></svg><div class="t" style="left:486.60px;top:630.00px;font-size:8.2px;color:#eee;transform:scaleX(0.9009);transform-origin:0 0">Filter</div><div class="tb" style="left:512.3px;width:52.3px"></div><svg style="left:514.8px;top:628.4px" width="10" height="10" viewBox="0 0 10 10"><path d="M5.2 1.9 A3.5 3.5 0 1 0 8.7 5.4" fill="none" stroke="#eee" stroke-width="1.05"/><path d="M4.7 0.5 L6.9 1.9 L4.7 3.3 Z" fill="#eee"/></svg><div class="t" style="left:525.60px;top:630.00px;font-size:8.2px;color:#eee;transform:scaleX(0.8600);transform-origin:0 0">Reset Filter</div><div class="tb" style="left:571.2px;width:61.3px"></div><div style="left:574.3px;top:627.8px;width:10.9px;height:10.9px;background:#fff;border-radius:1px"></div><div class="t" style="left:589.30px;top:630.00px;font-size:8.2px;color:#eee;transform:scaleX(0.8791);transform-origin:0 0">Persist Filter</div><div class="tb" style="left:639.2px;width:45.1px"></div><svg style="left:641.8px;top:628.6px" width="9.5" height="9.5" viewBox="0 0 9.5 9.5"><rect x="0.5" y="0.5" width="8.5" height="8.5" rx="1" fill="none" stroke="#fff" stroke-width="0.9"/><path d="M0.5 3.3 L9 3.3 M0.5 6.1 L9 6.1 M3.3 3.3 L3.3 9 M6.1 3.3 L6.1 9" stroke="#fff" stroke-width="0.8"/></svg><div class="t" style="left:652.40px;top:630.00px;font-size:8.2px;color:#eee;transform:scaleX(0.8882);transform-origin:0 0">Columns</div><div class="tb" style="left:690.7px;width:88.3px"></div><svg style="left:692.8px;top:628.6px" width="10" height="10" viewBox="0 0 10 10"><circle cx="4.8" cy="4.5" r="3.2" fill="none" stroke="#E8A317" stroke-width="1.1"/><path d="M0.2 4.8 L2.2 3.6 L2.2 6 Z M9.4 4.2 L7.4 3 L7.4 5.4 Z" fill="#E8A317"/></svg><div class="t" style="left:703.40px;top:630.00px;font-size:8.2px;color:#E8A317;transform:scaleX(0.9038);transform-origin:0 0">Recalculate Allocation</div><div style="left:788.3px;top:624.5px;width:1px;height:17px;background:#5d5c62"></div><div class="tb" style="left:795px;width:18px;background:#4F4E54"></div><svg style="left:800.5px;top:629.5px" width="7" height="7" viewBox="0 0 7 7"><path d="M1 0.5 L1 6.5" stroke="#6a696f" stroke-width="1.2"/><path d="M6.3 0.6 L2.2 3.5 L6.3 6.4 Z" fill="#6a696f"/></svg><div class="tb" style="left:820px;width:17px;background:#4F4E54"></div><svg style="left:825.5px;top:629.5px" width="7" height="7" viewBox="0 0 7 7"><path d="M5.5 0.6 L1.4 3.5 L5.5 6.4 Z" fill="#6a696f"/></svg><div class="t" style="left:843.40px;top:629.00px;font-size:8.7px;color:#fff;transform:scaleX(0.9213);transform-origin:0 0">Page</div><div style="left:866.2px;top:626.3px;width:16.3px;height:13.5px;background:#fff;border-radius:2px"></div><div class="t" style="left:869.60px;top:629.00px;font-size:8.7px;color:#222">1</div><div class="t" style="left:886.90px;top:629.00px;font-size:8.7px;color:#fff;transform:scaleX(0.9724);transform-origin:0 0">of 1</div><div class="tb" style="left:908.4px;width:17.2px;background:#4F4E54"></div><svg style="left:913.5px;top:629.5px" width="7" height="7" viewBox="0 0 7 7"><path d="M1.5 0.6 L5.6 3.5 L1.5 6.4 Z" fill="#6a696f"/></svg><div class="tb" style="left:933px;width:17.3px;background:#4F4E54"></div><svg style="left:938px;top:629.5px" width="7" height="7" viewBox="0 0 7 7"><path d="M0.7 0.6 L4.8 3.5 L0.7 6.4 Z" fill="#6a696f"/><path d="M6 0.5 L6 6.5" stroke="#6a696f" stroke-width="1.2"/></svg><div class="t" style="left:1055.80px;top:629.00px;font-size:8.7px;color:#fff;transform:scaleX(0.9604);transform-origin:0 0">1 - 324 of 324</div><div style="left:1114px;top:628px;width:35.7px;height:11.3px;border:1px solid #69686e;border-radius:2px;background:#4A494F"></div><div class="t" style="left:1116.50px;top:629.00px;font-size:8.3px;color:#fff;transform:scaleX(0.9638);transform-origin:0 0">4000</div><svg style="left:1141px;top:631px" width="7" height="5" viewBox="0 0 7 5"><path d="M0.8 0.9 L3.5 3.6 L6.2 0.9" fill="none" stroke="#eee" stroke-width="1.25"/></svg><div style="left:0;top:654.8px;width:124px;height:2.2px;background:#d0d0d0"></div></body></html>
